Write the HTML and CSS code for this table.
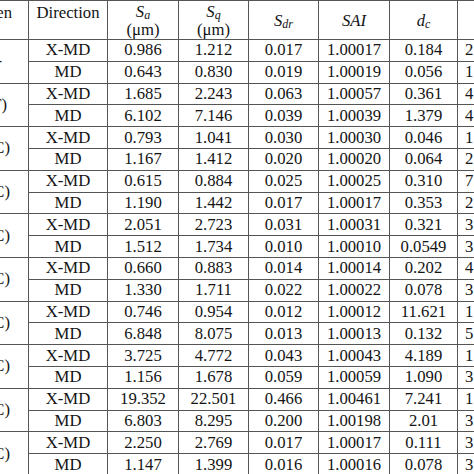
FILE: index.html
```html
<!DOCTYPE html>
<html>
<head>
<meta charset="utf-8">
<link rel="stylesheet" href="styles.css">
</head>
<body>
<div class="frame">
<table class="data">
  <colgroup>
    <col class="c-spec"><col class="c-dir"><col class="c-sa"><col class="c-sq"><col class="c-sdr"><col class="c-sai"><col class="c-dc"><col class="c-last">
  </colgroup>
  <thead>
    <tr>
      <th class="top spec">Specimen</th>
      <th class="top">Direction</th>
      <th><i>S</i><sub><i>a</i></sub><br>(μm)</th>
      <th><i>S</i><sub><i>q</i></sub><br>(μm)</th>
      <th><i>S</i><sub><i>dr</i></sub></th>
      <th><i>SAI</i></th>
      <th><i>d</i><sub><i>c</i></sub></th>
      <th class="lasth"><i>S</i><sub><i>tr</i></sub></th>
    </tr>
  </thead>
  <tbody>
    <tr><td rowspan="2" class="spec g1">Raw -</td><td>X-MD</td><td>0.986</td><td>1.212</td><td>0.017</td><td>1.00017</td><td>0.184</td><td class="last">2.41</td></tr>
    <tr><td>MD</td><td>0.643</td><td>0.830</td><td>0.019</td><td>1.00019</td><td>0.056</td><td class="last">1.92</td></tr>
    <tr><td rowspan="2" class="spec g2">Reference (RT)</td><td>X-MD</td><td>1.685</td><td>2.243</td><td>0.063</td><td>1.00057</td><td>0.361</td><td class="last">4.18</td></tr>
    <tr><td>MD</td><td>6.102</td><td>7.146</td><td>0.039</td><td>1.00039</td><td>1.379</td><td class="last">4.77</td></tr>
    <tr><td rowspan="2" class="spec">Sample A (40 °C)</td><td>X-MD</td><td>0.793</td><td>1.041</td><td>0.030</td><td>1.00030</td><td>0.046</td><td class="last">1.63</td></tr>
    <tr><td>MD</td><td>1.167</td><td>1.412</td><td>0.020</td><td>1.00020</td><td>0.064</td><td class="last">2.35</td></tr>
    <tr><td rowspan="2" class="spec">Sample B (60 °C)</td><td>X-MD</td><td>0.615</td><td>0.884</td><td>0.025</td><td>1.00025</td><td>0.310</td><td class="last">7.02</td></tr>
    <tr><td>MD</td><td>1.190</td><td>1.442</td><td>0.017</td><td>1.00017</td><td>0.353</td><td class="last">2.84</td></tr>
    <tr><td rowspan="2" class="spec">Sample C (80 °C)</td><td>X-MD</td><td>2.051</td><td>2.723</td><td>0.031</td><td>1.00031</td><td>0.321</td><td class="last">3.26</td></tr>
    <tr><td>MD</td><td>1.512</td><td>1.734</td><td>0.010</td><td>1.00010</td><td>0.0549</td><td class="last">3.51</td></tr>
    <tr><td rowspan="2" class="spec">Sample D (100 °C)</td><td>X-MD</td><td>0.660</td><td>0.883</td><td>0.014</td><td>1.00014</td><td>0.202</td><td class="last">4.09</td></tr>
    <tr><td>MD</td><td>1.330</td><td>1.711</td><td>0.022</td><td>1.00022</td><td>0.078</td><td class="last">3.37</td></tr>
    <tr><td rowspan="2" class="spec">Sample E (120 °C)</td><td>X-MD</td><td>0.746</td><td>0.954</td><td>0.012</td><td>1.00012</td><td>11.621</td><td class="last">1.48</td></tr>
    <tr><td>MD</td><td>6.848</td><td>8.075</td><td>0.013</td><td>1.00013</td><td>0.132</td><td class="last">5.66</td></tr>
    <tr><td rowspan="2" class="spec">Sample F (140 °C)</td><td>X-MD</td><td>3.725</td><td>4.772</td><td>0.043</td><td>1.00043</td><td>4.189</td><td class="last">1.25</td></tr>
    <tr><td>MD</td><td>1.156</td><td>1.678</td><td>0.059</td><td>1.00059</td><td>1.090</td><td class="last">3.14</td></tr>
    <tr><td rowspan="2" class="spec">Sample G (160 °C)</td><td>X-MD</td><td>19.352</td><td>22.501</td><td>0.466</td><td>1.00461</td><td>7.241</td><td class="last">1.87</td></tr>
    <tr><td>MD</td><td>6.803</td><td>8.295</td><td>0.200</td><td>1.00198</td><td>2.01</td><td class="last">3.72</td></tr>
    <tr><td rowspan="2" class="spec">Sample H (180 °C)</td><td>X-MD</td><td>2.250</td><td>2.769</td><td>0.017</td><td>1.00017</td><td>0.111</td><td class="last">3.05</td></tr>
    <tr><td>MD</td><td>1.147</td><td>1.399</td><td>0.016</td><td>1.00016</td><td>0.078</td><td class="last">3.43</td></tr>
  </tbody>
</table>
</div>
</body>
</html>
```
FILE: styles.css
```css
html, body {
  margin: 0;
  padding: 0;
  background: #ffffff;
}

.frame {
  width: 474px;
  height: 474px;
  overflow: hidden;
}

.data {
  border-collapse: collapse;
  table-layout: fixed;
  width: 749px;
  margin-left: -172px;
  font-family: "Liberation Serif", "Times New Roman", serif;
  font-size: 16.7px;
  color: #141414;
}

.c-spec { width: 200px; }
.c-dir { width: 79px; }
.c-sa { width: 71px; }
.c-sq { width: 70px; }
.c-sdr { width: 70px; }
.c-sai { width: 71px; }
.c-dc { width: 68px; }
.c-last { width: 120px; }

.data th,
.data td {
  border: 1px solid #555555;
  text-align: center;
  vertical-align: middle;
  padding: 0;
  white-space: nowrap;
  overflow: hidden;
}

.data th {
  font-weight: normal;
  height: 35px;
  padding-top: 1px;
  line-height: 17.5px;
}

.data th.top {
  vertical-align: top;
  padding-top: 3px;
}

.data td {
  height: 20.8px;
  line-height: 20px;
}

.data sub {
  font-size: 0.72em;
  line-height: 0;
  vertical-align: -0.15em;
}

.data .spec {
  text-align: right;
  padding-right: 16px;
}

.data td.spec {
  padding-right: 18px;
}

.data td.g1 {
  padding-right: 26px;
}

.data td.g2 {
  padding-right: 21px;
}

.data .last {
  text-align: left;
  padding-left: 7px;
}
```
